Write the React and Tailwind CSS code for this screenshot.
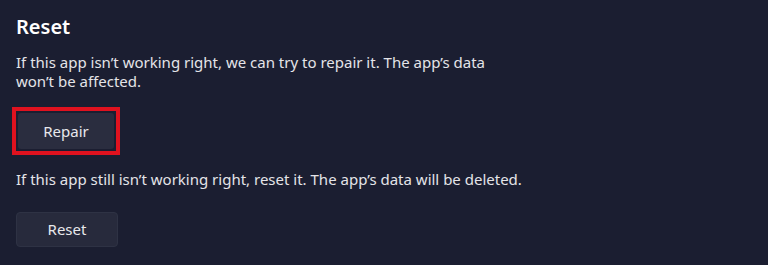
import React from "react";

function App() {
  return (
    <div
      className="h-[265px] w-[768px] overflow-hidden bg-[#1b1e31] px-4 pt-[14px] text-[#e4e4e8]"
      style={{ fontFamily: '"Noto Sans", "Open Sans", sans-serif' }}
    >
      <h2 className="text-[20px] font-semibold leading-[26px] text-white">Reset</h2>

      <p className="mt-[13px] w-[490px] text-[15px] leading-[19px]">
        If this app isn’t working right, we can try to repair it. The app’s data won’t be affected.
      </p>

      <div className="mt-[16px] -ml-[4px] w-fit border-[4px] border-[#e0121f] p-[2px]">
        <button className="flex h-[36px] w-[96px] items-center justify-center rounded-[3px] bg-[#2a2d3f] text-[15px] text-[#e8e8ec]">
          Repair
        </button>
      </div>

      <p className="mt-[15px] text-[15px] leading-[19px]">
        If this app still isn’t working right, reset it. The app’s data will be deleted.
      </p>

      <button className="mt-[23px] flex h-[35px] w-[102px] items-center justify-center rounded-[4px] border border-[#2e3244] bg-[#272a3c] text-[15px] text-[#e8e8ec]">
        Reset
      </button>
    </div>
  );
}

export default App;
